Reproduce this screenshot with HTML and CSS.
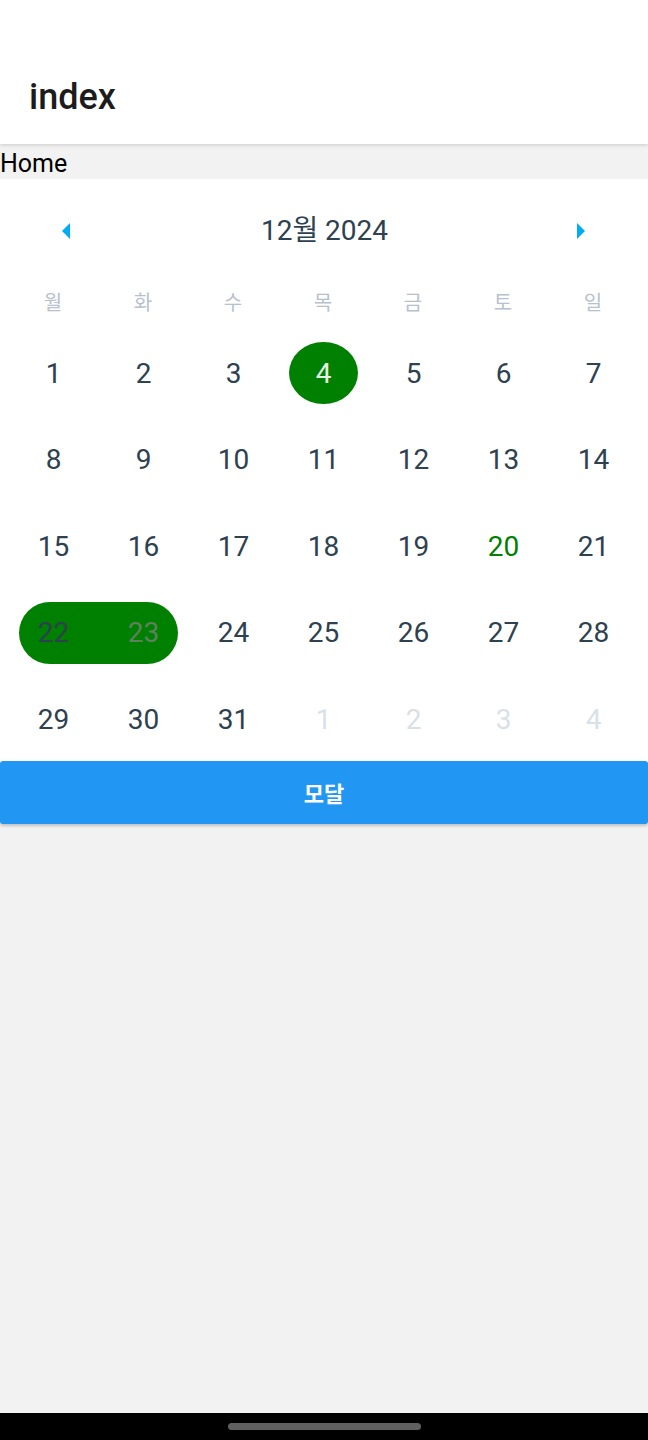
FILE: index.html
```html
<!DOCTYPE html>
<html lang="ko">
<head>
<meta charset="utf-8">
<title>index</title>
<link rel="stylesheet" href="styles.css">
</head>
<body>
<div class="screen">
  <header class="appbar"><h1 class="appbar-title">index</h1></header>
  <div class="crumb">Home</div>
  <section class="calendar">
    <div class="cal-head">
      <button class="arrow" aria-label="이전 달"><svg width="12" height="18" viewBox="0 0 12 18"><path d="M10 1 L2 9 L10 17 Z" fill="#00adf5"/></svg></button>
      <div class="cal-title">12월 2024</div>
      <button class="arrow" aria-label="다음 달"><svg width="12" height="18" viewBox="0 0 12 18"><path d="M2 1 L10 9 L2 17 Z" fill="#00adf5"/></svg></button>
    </div>
    <div class="weekdays">
      <span>월</span><span>화</span><span>수</span><span>목</span><span>금</span><span>토</span><span>일</span>
    </div>
    <div class="grid">
      <div class="day"><span class="num">1</span></div>
      <div class="day"><span class="num">2</span></div>
      <div class="day"><span class="num">3</span></div>
      <div class="day"><span class="num selected">4</span></div>
      <div class="day"><span class="num">5</span></div>
      <div class="day"><span class="num">6</span></div>
      <div class="day"><span class="num">7</span></div>

      <div class="day"><span class="num">8</span></div>
      <div class="day"><span class="num">9</span></div>
      <div class="day"><span class="num">10</span></div>
      <div class="day"><span class="num">11</span></div>
      <div class="day"><span class="num">12</span></div>
      <div class="day"><span class="num">13</span></div>
      <div class="day"><span class="num">14</span></div>

      <div class="day"><span class="num">15</span></div>
      <div class="day"><span class="num">16</span></div>
      <div class="day"><span class="num">17</span></div>
      <div class="day"><span class="num">18</span></div>
      <div class="day"><span class="num">19</span></div>
      <div class="day"><span class="num today">20</span></div>
      <div class="day"><span class="num">21</span></div>

      <div class="day"><span class="num period-start">22</span></div>
      <div class="day"><span class="num period-end">23</span></div>
      <div class="day"><span class="num">24</span></div>
      <div class="day"><span class="num">25</span></div>
      <div class="day"><span class="num">26</span></div>
      <div class="day"><span class="num">27</span></div>
      <div class="day"><span class="num">28</span></div>

      <div class="day"><span class="num">29</span></div>
      <div class="day"><span class="num">30</span></div>
      <div class="day"><span class="num">31</span></div>
      <div class="day"><span class="num other">1</span></div>
      <div class="day"><span class="num other">2</span></div>
      <div class="day"><span class="num other">3</span></div>
      <div class="day"><span class="num other">4</span></div>
    </div>
  </section>
  <button class="modal-btn">모달</button>
  <div class="spacer"></div>
  <div class="navbar"><div class="handle"></div></div>
</div>
</body>
</html>
```

FILE: styles.css
```css
* { box-sizing: border-box; }
html, body { margin: 0; padding: 0; }
body {
  background: #f2f2f2;
  font-family: Roboto, "Noto Sans CJK KR", sans-serif;
}
.screen {
  height: 1440px;
  display: flex;
  flex-direction: column;
}
.appbar {
  height: 144px;
  background: #ffffff;
  display: flex;
  align-items: flex-end;
  padding: 0 0 21px 29px;
  box-shadow: 0 1px 4px rgba(0,0,0,0.16);
  position: relative;
  z-index: 1;
}
.appbar-title {
  margin: 0;
  font-size: 36px;
  font-weight: 500;
  color: #1c1c1c;
  line-height: 52px;
}
.crumb {
  height: 35px;
  font-size: 25px;
  line-height: 39px;
  color: #000;
  padding-left: 0;
}
.calendar {
  background: #ffffff;
  padding: 30px 10px 0 8px;
}
.cal-head {
  height: 44px;
  display: flex;
  align-items: center;
  justify-content: space-between;
  padding: 0 47px 0 48px;
}
.arrow {
  border: 0;
  background: none;
  padding: 0;
  width: 20px;
  height: 20px;
  display: flex;
  align-items: center;
  justify-content: center;
}
.cal-title {
  font-size: 28px;
  color: #2d4150;
  margin-left: 2px;
  line-height: 40px;
}
.weekdays {
  margin-top: 32px;
  height: 32px;
  display: grid;
  grid-template-columns: repeat(7, 90px);
  align-items: center;
}
.weekdays span {
  text-align: center;
  font-size: 20px;
  color: #b6c1cd;
}
.grid {
  margin-top: 13px;
  display: grid;
  grid-template-columns: repeat(7, 90px);
  grid-auto-rows: 86.5px;
}
.day {
  display: flex;
  align-items: center;
}
.num {
  flex: 1;
  height: 62px;
  margin: 0 10px 0 11px;
  display: flex;
  align-items: center;
  justify-content: center;
  font-size: 28px;
  color: #2d4150;
}
.num.selected {
  background: #008000;
  color: #e6f0e6;
  border-radius: 50%;
}
.num.today { color: #008000; }
.num.other { color: #d9e1e8; }
.num.period-start {
  background: #008000;
  margin-right: 0;
  padding-right: 10px;
  border-radius: 31px 0 0 31px;
  color: #2d4150;
}
.num.period-end {
  background: #008000;
  margin-left: 0;
  padding-left: 11px;
  border-radius: 0 31px 31px 0;
  color: #5e805e;
}
.modal-btn {
  height: 63px;
  border: 0;
  border-radius: 3px;
  background: #2196f3;
  color: #ffffff;
  font-family: Roboto, "Noto Sans CJK KR", sans-serif;
  font-size: 22px;
  font-weight: 700;
  box-shadow: 0 2px 3px rgba(0,0,0,0.2);
  padding: 0;
  margin-top: -2px;
}
.spacer { flex: 1; }
.navbar {
  height: 27px;
  background: #000;
  display: flex;
  justify-content: center;
  padding-top: 10px;
}
.handle {
  width: 193px;
  height: 7px;
  border-radius: 4px;
  background: #5f5f5f;
}
```
